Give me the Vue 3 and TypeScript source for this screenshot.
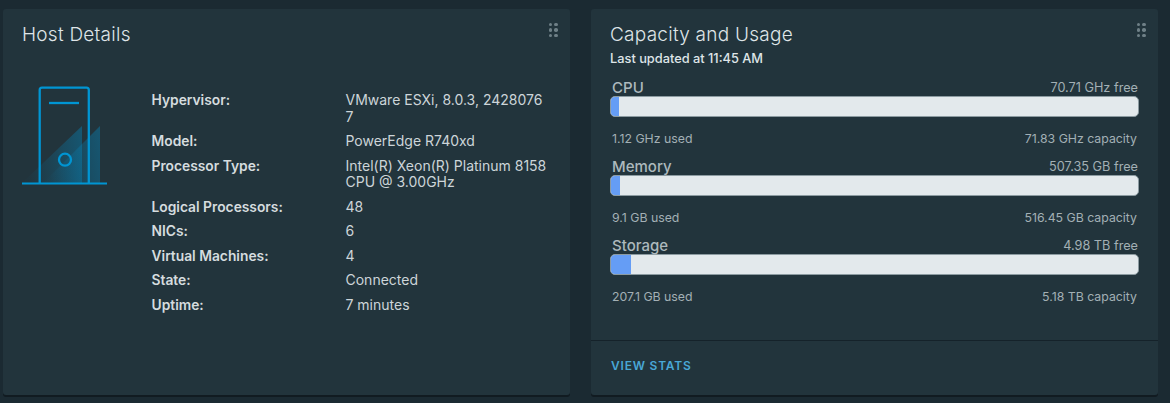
<template>
  <div class="page">
    <section class="card">
      <span class="grip"><i v-for="n in 6" :key="n"></i></span>
      <h2 class="title">Host Details</h2>
      <div class="host-body">
        <svg class="host-icon" width="86" height="102" viewBox="0 0 86 102" aria-hidden="true">
          <defs>
            <linearGradient id="shade" x1="0" y1="0.15" x2="1" y2="0">
              <stop offset="0" stop-color="#0095d3" stop-opacity="0.02" />
              <stop offset="1" stop-color="#0095d3" stop-opacity="0.36" />
            </linearGradient>
          </defs>
          <path d="M0 97 L60 40 V97 Z" fill="url(#shade)" />
          <path d="M21 97 L78 40 V97 Z" fill="url(#shade)" />
          <path d="M17.7 97 V4 Q17.7 1.6 20 1.6 H64.5 Q66.8 1.6 66.8 4 V97" fill="none" stroke="#0095d3" stroke-width="2.3" />
          <path d="M27 17 H57" stroke="#0095d3" stroke-width="2.3" fill="none" />
          <circle cx="43" cy="73.7" r="6" fill="none" stroke="#0095d3" stroke-width="2.3" />
          <path d="M0 97.5 H85" stroke="#0095d3" stroke-width="2.2" fill="none" />
        </svg>
        <dl class="details">
          <template v-for="row in rows" :key="row.label">
            <dt>{{ row.label }}</dt>
            <dd>
              <template v-for="(line, i) in row.lines" :key="i"><br v-if="i > 0" />{{ line }}</template>
            </dd>
          </template>
        </dl>
      </div>
    </section>

    <section class="card usage">
      <span class="grip"><i v-for="n in 6" :key="n"></i></span>
      <div class="usage-main">
        <h2 class="title">Capacity and Usage</h2>
        <p class="updated">Last updated at 11:45 AM</p>
        <div v-for="m in meters" :key="m.name" class="meter">
          <div class="meter-head">
            <span class="meter-name">{{ m.name }}</span>
            <span>{{ m.free }}</span>
          </div>
          <div class="bar"><div class="bar-fill" :style="{ width: m.pct + 'px' }"></div></div>
          <div class="meter-foot">
            <span>{{ m.used }}</span>
            <span>{{ m.capacity }}</span>
          </div>
        </div>
      </div>
      <footer class="usage-foot"><a class="link">VIEW STATS</a></footer>
    </section>
  </div>
</template>

<script setup lang="ts">
const rows = [
  { label: 'Hypervisor:', lines: ['VMware ESXi, 8.0.3, 2428076', '7'] },
  { label: 'Model:', lines: ['PowerEdge R740xd'] },
  { label: 'Processor Type:', lines: ['Intel(R) Xeon(R) Platinum 8158', 'CPU @ 3.00GHz'] },
  { label: 'Logical Processors:', lines: ['48'] },
  { label: 'NICs:', lines: ['6'] },
  { label: 'Virtual Machines:', lines: ['4'] },
  { label: 'State:', lines: ['Connected'] },
  { label: 'Uptime:', lines: ['7 minutes'] },
]

const meters = [
  { name: 'CPU', free: '70.71 GHz free', used: '1.12 GHz used', capacity: '71.83 GHz capacity', pct: 8 },
  { name: 'Memory', free: '507.35 GB free', used: '9.1 GB used', capacity: '516.45 GB capacity', pct: 9 },
  { name: 'Storage', free: '4.98 TB free', used: '207.1 GB used', capacity: '5.18 TB capacity', pct: 20 },
]
</script>

<style>
html,
body {
  margin: 0;
  background: #1b2a32;
}
</style>

<style scoped>
.page {
  box-sizing: border-box;
  width: 1170px;
  height: 403px;
  padding: 9px 12px 8px 3px;
  display: grid;
  grid-template-columns: 567px 567px;
  column-gap: 21px;
  background: #1b2a32;
  font-family: Inter, "Open Sans", sans-serif;
  color: #e0e6e9;
  overflow: hidden;
}
.card {
  position: relative;
  background: #22343c;
  border-radius: 3px;
  box-shadow: 0 2px 0 #111b21;
  display: flex;
  flex-direction: column;
}
.title {
  margin: 0;
  font-size: 19px;
  line-height: 24px;
  font-weight: 300;
  letter-spacing: 0.25px;
  color: #dfe5e8;
  padding: 14px 0 0 19px;
}
.grip {
  position: absolute;
  top: 13.5px;
  right: 12.5px;
  display: grid;
  grid-template-columns: 3.5px 3.5px;
  column-gap: 2px;
  row-gap: 2px;
}
.grip i {
  width: 3.5px;
  height: 3.5px;
  border-radius: 50%;
  background: #6f8087;
}
.host-body {
  display: flex;
  padding: 39px 0 0 19px;
}
.host-icon {
  flex: none;
}
.details {
  margin: 6px 0 0 43.5px;
  display: grid;
  grid-template-columns: 194px 210px;
  align-content: start;
  row-gap: 8px;
  font-size: 14px;
  line-height: 16.5px;
}
.details dt {
  font-size: 13.8px;
  font-weight: 600;
  color: #d5dcdf;
}
.details dd {
  margin: 0;
  color: #cdd5d9;
}
.usage-main {
  flex: 1;
}
.updated {
  margin: 4px 0 9px 19px;
  font-size: 12.8px;
  line-height: 16px;
  font-weight: 500;
  color: #dfe5e8;
}
.meter {
  padding: 0 19px;
  height: 79px;
  font-size: 12.3px;
  color: #a3b0b5;
}
.meter-head,
.meter-foot {
  display: flex;
  justify-content: space-between;
  padding: 0 2px;
  line-height: 16px;
}
.meter-head {
  height: 16px;
  padding: 4px 1px 0 2px;
  font-size: 12.7px;
}
.meter-name {
  font-size: 15px;
  font-weight: 500;
  color: #adb9bd;
}
.bar {
  height: 19px;
  border: 1px solid #8c9ba1;
  border-radius: 5px;
  background: #e3e9ec;
  overflow: hidden;
}
.bar-fill {
  height: 100%;
  background: #659df5;
}
.meter-foot {
  margin-top: 14px;
}
.usage-foot {
  box-sizing: border-box;
  border-top: 1px solid #15222a;
  height: 55px;
  padding: 0 0 6px 20px;
  display: flex;
  align-items: center;
}
.link {
  font-size: 12px;
  font-weight: 600;
  letter-spacing: 0.8px;
  color: #49a7d6;
}
</style>
